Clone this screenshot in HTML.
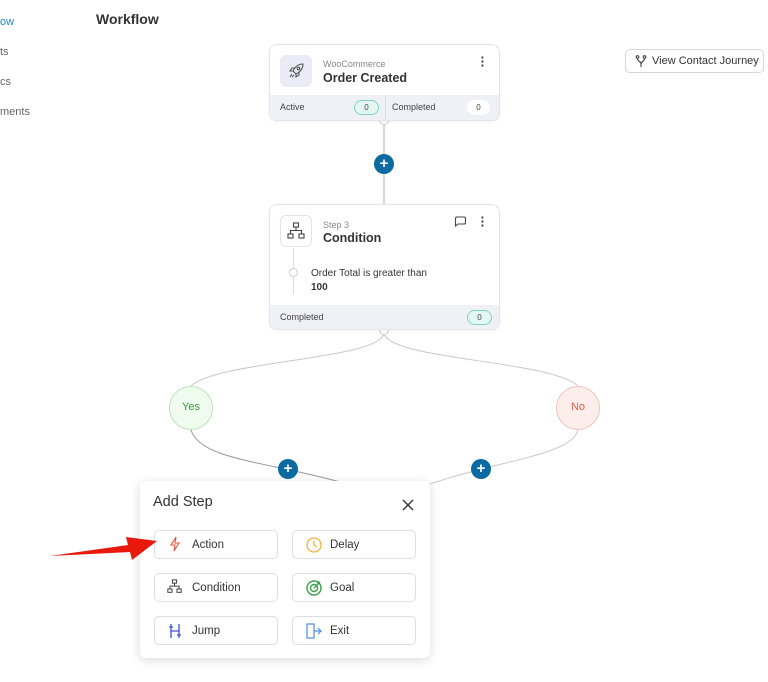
<!DOCTYPE html>
<html><head><meta charset="utf-8"><style>
*{box-sizing:border-box;margin:0;padding:0}
body{width:768px;height:682px;background:#fff;font-family:"Liberation Sans",sans-serif;position:relative;overflow:hidden;color:#333}
.abs{position:absolute}
.card{position:absolute;left:269px;width:231px;background:#fff;border:1px solid #e3e4ec;border-radius:8px;overflow:hidden;box-shadow:0 1px 3px rgba(0,0,0,.05)}
.foot{position:absolute;left:0;right:0;bottom:0;height:24px;background:#f0f0f7;font-size:9px;color:#444}
.pill{position:absolute;height:15px;border-radius:8px;font-size:8px;display:flex;align-items:center;justify-content:center}
.btn{position:absolute;width:124px;height:29px;border:1px solid #dcdde6;border-radius:5px;font-size:11.5px;color:#333;display:flex;align-items:center;padding-left:37px}
.btn svg{position:absolute;left:12px;top:5px}
.plus{position:absolute;width:20px;height:20px;border-radius:50%;background:#0a6aa1;color:#fff;text-align:center;line-height:19px;font-size:15px;font-weight:bold}
</style></head><body>
<div class="abs" style="left:0;top:16px;font-size:11px;color:#1a8ac4">ow</div>
<div class="abs" style="left:0;top:46px;font-size:11px;color:#666">ts</div>
<div class="abs" style="left:0;top:76px;font-size:11px;color:#666">cs</div>
<div class="abs" style="left:0;top:106px;font-size:11px;color:#666">ments</div>
<div class="abs" style="left:96px;top:11px;font-size:14px;font-weight:bold;color:#333">Workflow</div>

<div class="abs" style="left:625px;top:49px;width:139px;height:24px;border:1px solid #d6d7de;border-radius:5px;font-size:11px;line-height:22px;padding-left:26px;color:#333">View Contact Journey
<svg class="abs" style="left:9px;top:5px" width="12" height="13" viewBox="0 0 12 13" fill="none" stroke="#444" stroke-width="1.1"><circle cx="2.5" cy="2" r="1.3"/><circle cx="9.5" cy="2" r="1.3"/><path d="M2.5 3.3C2.5 7 6 6 6 9V12M9.5 3.3C9.5 7 6 6 6 9"/></svg></div>

<svg class="abs" style="left:0;top:0" width="768" height="682" fill="none">
<path d="M384 120V204" stroke="#ccc" stroke-width="1.5"/>
<path d="M384 333C380 360 220 360 191 386" stroke="#c8c8c8" stroke-width="1"/>
<path d="M384 333C388 360 550 360 578 386" stroke="#c8c8c8" stroke-width="1"/>
<path d="M191 430C200 460 270 462 340 482" stroke="#999" stroke-width="1"/>
<path d="M578 430C572 455 500 460 430 484" stroke="#c8c8c8" stroke-width="1"/>
<circle cx="384" cy="120" r="4.5" fill="#fff" stroke="#ccc"/>
<circle cx="384" cy="330" r="4.5" fill="#fff" stroke="#ccc"/>
</svg>

<div class="card" style="top:44px;height:77px">
 <div class="abs" style="left:10px;top:10px;width:32px;height:32px;border-radius:6px;background:#ebebf7"></div>
 <svg class="abs" style="left:18px;top:17px" width="17" height="17" viewBox="0 0 17 17" fill="none" stroke="#555" stroke-width="1.1"><path d="M15 2C10 2 7 5 5 9l3 3c4-2 7-5 7-10z"/><circle cx="10.5" cy="6.5" r="1.3"/><path d="M5 9H2l2-3h3M8 12v3l3-2v-3M4 12l-2 3M6 13l-2 2"/></svg>
 <div class="abs" style="left:53px;top:14px;font-size:9px;color:#888">WooCommerce</div>
 <div class="abs" style="left:53px;top:26px;font-size:12.5px;font-weight:bold;color:#333">Order Created</div>
 <div class="abs" style="right:14px;top:11px;font-size:13px;font-weight:bold;line-height:4px">·<br>·<br>·</div>
 <div class="foot" style="height:25px">
  <div class="abs" style="left:10px;top:7px">Active</div>
  <div class="pill" style="left:84px;top:5px;width:25px;border:1px solid #7fd4c1;background:#e5f7f2">0</div>
  <div class="abs" style="left:115px;top:0;width:1px;height:25px;background:#dcdce6"></div>
  <div class="abs" style="left:122px;top:7px">Completed</div>
  <div class="pill" style="left:197px;top:5px;width:23px;background:#fff">0</div>
 </div>
</div>

<div class="plus" style="left:374px;top:154px">+</div>

<div class="card" style="top:204px;height:126px">
 <div class="abs" style="left:10px;top:10px;width:32px;height:32px;border-radius:6px;border:1px solid #e3e4ec;background:#fff"></div>
 <svg class="abs" style="left:17px;top:17px" width="18" height="18" viewBox="0 0 18 18" fill="none" stroke="#444" stroke-width="1.1"><rect x="6.5" y="1" width="5" height="4"/><rect x="1" y="12" width="5" height="4"/><rect x="12" y="12" width="5" height="4"/><path d="M9 5v3.5M3.5 12V8.5h11V12"/></svg>
 <div class="abs" style="left:53px;top:15px;font-size:9px;color:#888">Step 3</div>
 <div class="abs" style="left:53px;top:26px;font-size:12.5px;font-weight:bold;color:#333">Condition</div>
 <svg class="abs" style="left:184px;top:11px" width="12" height="11" viewBox="0 0 12 11" fill="none" stroke="#444" stroke-width="1.1"><path d="M2 1h8a1.5 1.5 0 011.5 1.5v4A1.5 1.5 0 0110 8H4l-2.5 2V2.5A1.5 1.5 0 013 1z"/></svg>
 <div class="abs" style="right:14px;top:11px;font-size:13px;font-weight:bold;line-height:4px">·<br>·<br>·</div>
 <div class="abs" style="left:23px;top:43px;width:1px;height:46px;background:#ddd"></div>
 <div class="abs" style="left:19px;top:63px;width:9px;height:9px;border-radius:50%;border:1px solid #ccc;background:#fff"></div>
 <div class="abs" style="left:41px;top:62px;font-size:10px;color:#333;line-height:14px">Order Total is greater than<br><b>100</b></div>
 <div class="foot">
  <div class="abs" style="left:10px;top:7px">Completed</div>
  <div class="pill" style="left:197px;top:5px;width:25px;border:1px solid #7fd4c1;background:#e5f7f2">0</div>
 </div>
</div>

<div class="abs" style="left:169px;top:386px;width:44px;height:44px;border-radius:50%;background:#effbef;border:1.5px solid #b8e5b8;text-align:center;line-height:41px;font-size:11px;color:#3a9a3a">Yes</div>
<div class="abs" style="left:556px;top:386px;width:44px;height:44px;border-radius:50%;background:#fdeeec;border:1.5px solid #ebc3be;text-align:center;line-height:41px;font-size:11px;color:#e0604c">No</div>

<div class="plus" style="left:278px;top:459px">+</div>
<div class="plus" style="left:471px;top:459px">+</div>

<div class="abs" style="left:140px;top:481px;width:290px;height:177px;background:#fff;border-radius:6px;box-shadow:0 2px 10px rgba(0,0,0,.15)">
 <div class="abs" style="left:13px;top:13px;font-size:14.5px;color:#333">Add Step</div>
 <svg class="abs" style="left:262px;top:18px" width="12" height="12" stroke="#333" stroke-width="1.4"><path d="M1 1l10 10M11 1L1 11"/></svg>
</div>
<div class="btn" style="left:154px;top:530px">Action<svg width="16" height="16" viewBox="0 0 16 16" fill="none" stroke="#e8553f" stroke-width="1.1"><path d="M9 1L4 9h4l-1 6 5-8H8z"/></svg></div>
<div class="btn" style="left:292px;top:530px">Delay<svg width="18" height="18" viewBox="0 0 18 18" fill="none" stroke="#f5b13a" stroke-width="1.3"><circle cx="9" cy="9" r="7"/><path d="M9 5v4l3 2"/></svg></div>
<div class="btn" style="left:154px;top:573px">Condition<svg width="15" height="15" viewBox="0 0 18 18" fill="none" stroke="#444" stroke-width="1.2"><rect x="6.5" y="1" width="5" height="4"/><rect x="1" y="12" width="5" height="4"/><rect x="12" y="12" width="5" height="4"/><path d="M9 5v3.5M3.5 12V8.5h11V12"/></svg></div>
<div class="btn" style="left:292px;top:573px">Goal<svg width="18" height="18" viewBox="0 0 18 18" fill="none" stroke="#3aa34a" stroke-width="1.4"><circle cx="9" cy="9" r="7"/><circle cx="9" cy="9" r="3.5"/><path d="M9 9l6-6M13 2v2h2"/></svg></div>
<div class="btn" style="left:154px;top:616px">Jump<svg width="16" height="18" viewBox="0 0 16 18" fill="none" stroke="#3b4fd8" stroke-width="1.3"><path d="M4 2v14M12 2v14M2 5h4M10 13h4M4 9h8"/></svg></div>
<div class="btn" style="left:292px;top:616px">Exit<svg width="18" height="18" viewBox="0 0 18 18" fill="none" stroke="#4a8ee8" stroke-width="1.2"><rect x="2" y="2" width="7" height="14"/><path d="M9 9h7M13 6l3 3-3 3"/></svg></div>

<svg class="abs" style="left:0;top:0" width="200" height="600"><path d="M50 556L128 545L126 537L157 541L132 560L130 552Z" fill="#e8180c"/></svg>
</body></html>
